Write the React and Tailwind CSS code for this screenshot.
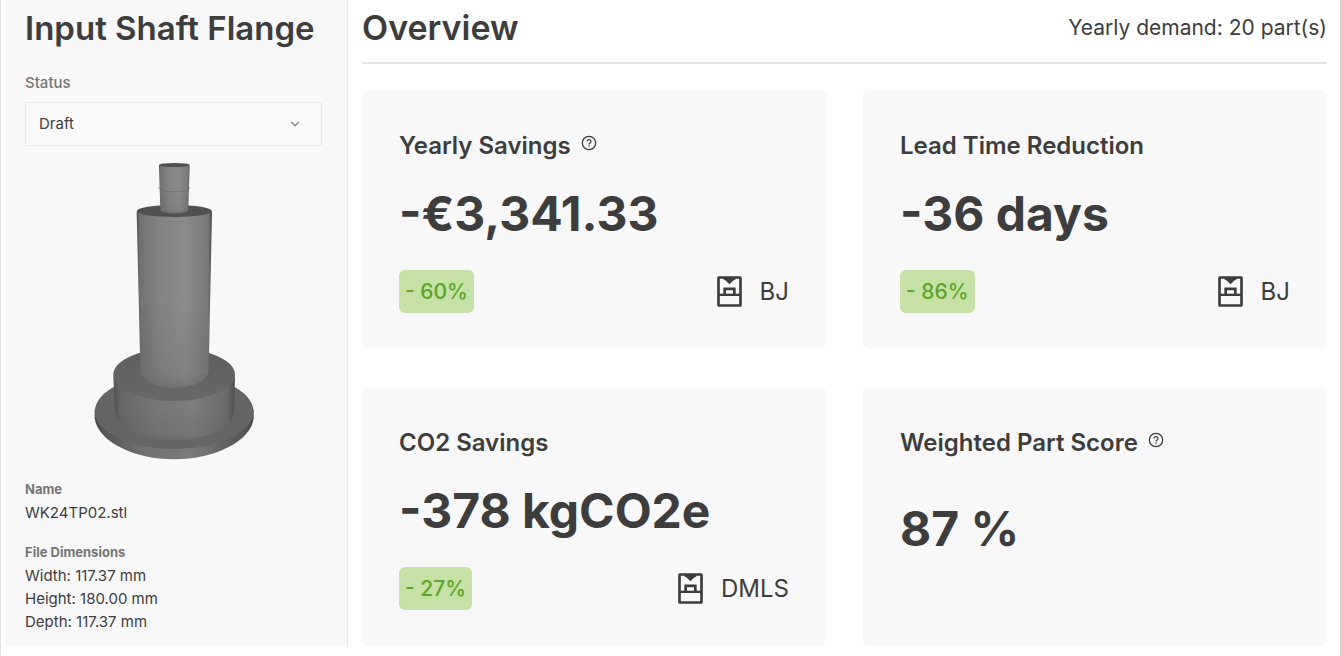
import { ChevronDown } from 'lucide-react';

const cards = [
    { title: 'Yearly Savings', help: true, value: '-€3,341.33', change: '- 60%', process: 'BJ' },
    { title: 'Lead Time Reduction', value: '-36 days', change: '- 86%', process: 'BJ' },
    { title: 'CO2 Savings', value: '-378 kgCO2e', change: '- 27%', process: 'DMLS' },
    { title: 'Weighted Part Score', help: true, value: '87 %' },
];

function HelpIcon() {
    return (
        <svg viewBox="0 0 16 16" className="size-4" fill="none" stroke="currentColor" aria-hidden="true">
            <circle cx="8" cy="8" r="6.7" strokeWidth="1.3" />
            <path d="M6 6.6a2 1.9 0 1 1 3 1.5c-.7.4-1 .7-1 1.4" strokeWidth="1.2" />
            <path d="M8 10.5v1.3" strokeWidth="1.3" />
        </svg>
    );
}

function PrinterIcon() {
    return (
        <svg viewBox="0 0 75 93" className="h-[31px] w-[25px]" fill="none" stroke="currentColor" aria-hidden="true">
            <rect x="4.5" y="4.5" width="66" height="84" rx="1" strokeWidth="8" />
            <path d="M20 5h35v6l-5 2-12.500 12-12.500-12-5-2z" fill="currentColor" stroke="none" />
            <path d="M5 56.5h65" strokeWidth="7" />
            <path d="M23 56V38.500h29V56" strokeWidth="8" />
        </svg>
    );
}

function PartModel() {
    return (
        <svg viewBox="40 36 480 894" className="mx-auto h-[298px] w-40" role="img" aria-label="Part preview">
            <defs>
                <linearGradient id="shade" x1="0" x2="1">
                    <stop offset="0" stopColor="#4c4c4c" />
                    <stop offset="0.04" stopColor="#707070" />
                    <stop offset="0.3" stopColor="#838383" />
                    <stop offset="0.65" stopColor="#8b8b8b" />
                    <stop offset="0.95" stopColor="#787878" />
                    <stop offset="1" stopColor="#484848" />
                </linearGradient>
                <linearGradient id="collar" x1="0" x2="1">
                    <stop offset="0" stopColor="#505050" />
                    <stop offset="0.06" stopColor="#666666" />
                    <stop offset="0.35" stopColor="#777777" />
                    <stop offset="0.65" stopColor="#7d7d7d" />
                    <stop offset="0.94" stopColor="#6a6a6a" />
                    <stop offset="1" stopColor="#4c4c4c" />
                </linearGradient>
                <linearGradient id="rim" x1="0" x2="1">
                    <stop offset="0" stopColor="#4e4e4e" />
                    <stop offset="0.3" stopColor="#707070" />
                    <stop offset="0.6" stopColor="#7c7c7c" />
                    <stop offset="1" stopColor="#4e4e4e" />
                </linearGradient>
                <linearGradient id="face" x1="0" x2="0" y1="0" y2="1">
                    <stop offset="0" stopColor="#5e5e5e" />
                    <stop offset="1" stopColor="#686868" />
                </linearGradient>
                <linearGradient id="fade" x1="0" x2="0" y1="0" y2="1">
                    <stop offset="0.5" stopColor="#404040" stopOpacity="0" />
                    <stop offset="0.92" stopColor="#404040" stopOpacity="0.12" />
                    <stop offset="1" stopColor="#404040" stopOpacity="0.3" />
                </linearGradient>
            </defs>

            {/* Base flange */}
            <path d="M42 780V805C50 872 155 928 280 928S512 872 519 805V780z" fill="url(#rim)" />
            <ellipse cx="280.5" cy="784" rx="238" ry="113" fill="#656565" />

            {/* Collar */}
            <path d="M98 680L103 785C107 835 185 870 281 870S457 835 460 785L463 680z" fill="url(#collar)" />
            <path d="M98 680L103 785C107 835 185 870 281 870S457 835 460 785L463 680z" fill="url(#fade)" />
            <ellipse cx="280.5" cy="674" rx="182.5" ry="79" fill="url(#face)" />

            {/* Shaft */}
            <path d="M168 186L179 660C181 693 225 713 281 713S382 693 384 660L394 186z" fill="url(#shade)" />
            <path d="M168 186L179 660C181 693 225 713 281 713S382 693 384 660L394 186z" fill="url(#fade)" />
            <ellipse cx="281" cy="183" rx="113" ry="18" fill="#505050" />

            {/* Pin */}
            <path d="M235 46L239 181C241 186 258 190 281 190S321 186 323 181L327 46z" fill="url(#shade)" />
            <path d="M235 46L239 181C241 186 258 190 281 190S321 186 323 181L327 46z" fill="url(#fade)" />
            <path d="M234 112C236 122 258 125 281 125S326 122 328 112" fill="none" stroke="#6a6a6a" strokeWidth="2" />
            <ellipse cx="281" cy="45" rx="46" ry="6" fill="#505050" />
        </svg>
    );
}

function Card({ title, help, value, change, process }) {
    return (
        <section className="rounded-md bg-[#f8f8f8] px-[37px] pt-[38px] pb-9">
            <h2 className="flex items-center gap-2.5 text-2xl leading-9 font-semibold">
                {title}
                {help && (
                    <button type="button" aria-label={`About ${title}`} className="mb-1.5">
                        <HelpIcon />
                    </button>
                )}
            </h2>
            <p className={change ? 'mt-5 text-5xl leading-[60px] font-bold' : 'mt-[38px] text-5xl leading-[60px] font-bold'}>
                {value}
            </p>
            {change && (
                <div className="mt-[26px] flex items-center justify-between">
                    <span className="rounded-md bg-[#c5e1a5] px-1.5 text-[21px] leading-[43px] font-medium text-[#5fa328]">
                        {change}
                    </span>
                    <span className="flex items-center gap-[18px] text-2xl">
                        <PrinterIcon />
                        {process}
                    </span>
                </div>
            )}
        </section>
    );
}

export default function App() {
    return (
        <div className="flex min-h-screen border-r-2 border-l border-r-[#d2d2d2] border-l-[#e2e2e2] bg-white pl-1 pb-2.5 font-['Inter',sans-serif] text-[#3d3d3d]">
            <aside className="w-[343px] shrink-0 border-r border-[#e8e8e8] bg-[#f8f8f8] pr-[25px] pl-5 text-base">
                <h1 className="pt-2 text-[33px] leading-10 font-semibold whitespace-nowrap">Input Shaft Flange</h1>

                <label htmlFor="status" className="mt-6 block text-[15px] leading-[22px] font-medium text-[#757575]">
                    Status
                </label>
                <div className="relative mt-2">
                    <select
                        id="status"
                        defaultValue="Draft"
                        className="h-11 w-full appearance-none rounded-xs border border-[#e8e8e8] bg-[#f9f9f9] px-[13px] text-[15px]"
                    >
                        <option>Draft</option>
                        <option>Released</option>
                    </select>
                    <ChevronDown className="pointer-events-none absolute top-[15px] right-5 size-3.5 text-[#808080]" />
                </div>

                <div className="mt-4">
                    <PartModel />
                </div>

                <dl className="mt-[18px] text-[15px] leading-[23px]">
                    <dt className="text-[13px] font-bold text-[#757575]">Name</dt>
                    <dd>WK24TP02.stl</dd>
                    <dt className="mt-[17px] text-[13px] font-bold text-[#757575]">File Dimensions</dt>
                    <dd>Width: 117.37 mm</dd>
                    <dd>Height: 180.00 mm</dd>
                    <dd>Depth: 117.37 mm</dd>
                </dl>
            </aside>

            <main className="flex-1 pr-[13px] pl-3.5">
                <header className="flex items-center justify-between border-b-2 border-[#e4e4e4] pt-2 pb-3.5">
                    <h1 className="text-[34px] leading-10 font-semibold">Overview</h1>
                    <p className="text-[21px]">Yearly demand: 20 part(s)</p>
                </header>
                <div className="mt-[26px] grid grid-cols-2 gap-x-[37px] gap-y-[38px]">
                    {cards.map((card) => (
                        <Card key={card.title} {...card} />
                    ))}
                </div>
            </main>
        </div>
    );
}
